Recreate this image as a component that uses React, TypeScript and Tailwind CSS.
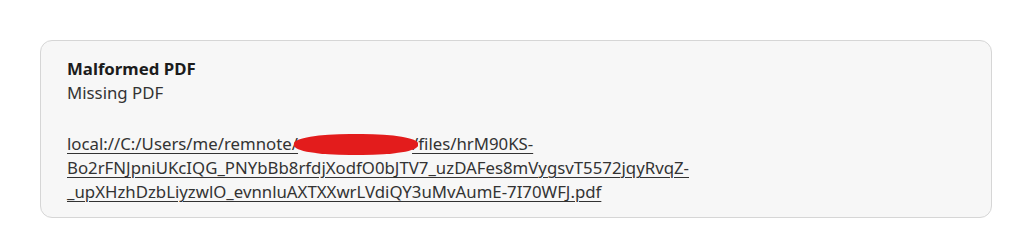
import React from 'react';

const App: React.FC = () => {
    return (
        <div className="min-h-[233px] bg-white pt-[40px] pl-[40px] pr-[32px] font-['Noto_Sans',sans-serif]">
            <div className="rounded-[12px] border border-[#d6d6d6] bg-[#f7f7f7] pl-[26px] pr-6 pt-[16px] pb-[13px] text-[16.8px] leading-6 text-[#222]">
                <div className="font-bold text-[#1c1c1c]">Malformed PDF</div>
                <div className="text-[#333]">Missing PDF</div>
                <a
                    href="#"
                    className="mt-[24px] block break-words text-[#333] underline decoration-[1px] underline-offset-[3px]"
                >
                    local://C:/Users/me/remnote/
                    <span className="-ml-[4px] -mr-[6px] inline-block h-[21px] w-[124px] translate-y-[5px] rounded-[45%] bg-[#e31c1c] align-baseline" />
                    /files/hrM90KS-Bo2rFNJpniUKcIQG_PNYbBb8rfdjXodfO0bJTV7_uzDAFes8mVygsvT5572jqyRvqZ-_upXHzhDzbLiyzwlO_evnnluAXTXXwrLVdiQY3uMvAumE-7I70WFJ.pdf
                </a>
            </div>
        </div>
    );
};

export default App;
